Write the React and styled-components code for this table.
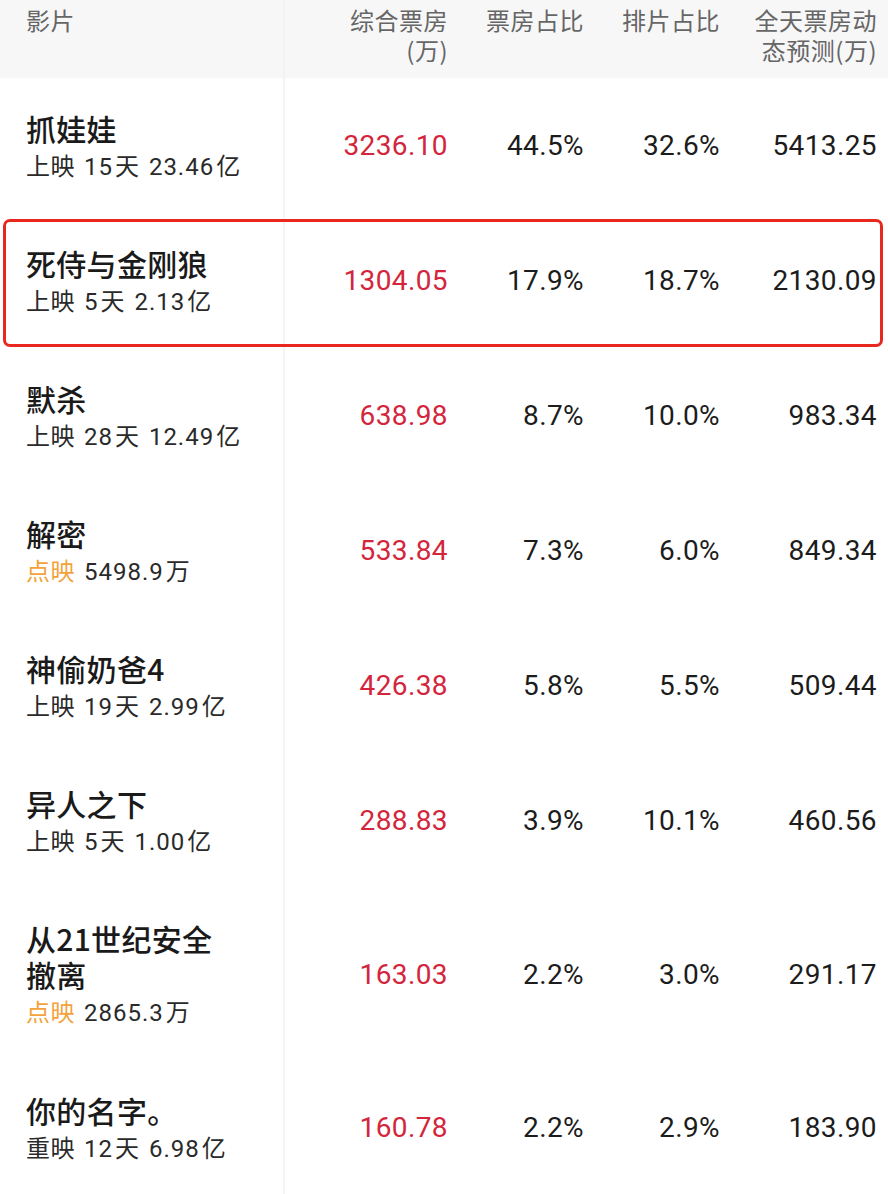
import React from 'react'
import styled, { createGlobalStyle } from 'styled-components';

const GlobalStyle = createGlobalStyle`
    html, body {
        margin: 0;
        padding: 0;
        background: #ffffff;
    }
    body {
        font-family: "Noto Sans CJK SC", "Noto Sans", sans-serif;
        -webkit-font-smoothing: antialiased;
    }
`;

const COLS = '285px 163px 136px 136px 157px';

const Table = styled.div`
    width: 888px;
    background: #ffffff;
    padding-right: 11px;
    box-sizing: border-box;
`;

const HeaderRow = styled.div`
    display: grid;
    grid-template-columns: ${COLS};
    height: 78px;
    background: #f7f7f8;
    margin-right: -11px;
    padding-right: 11px;
`;

const HeadCell = styled.div`
    padding-top: 5px;
    font-size: 24px;
    line-height: 30px;
    letter-spacing: 0.5px;
    color: #666666;
    text-align: ${p => (p.$left ? 'left' : 'right')};
    padding-left: ${p => (p.$left ? '26px' : '0')};
    ${p => p.$left && 'border-right: 2px solid #f2f2f3;'}
`;

const Row = styled.div`
    position: relative;
    display: grid;
    grid-template-columns: ${COLS};
    height: ${p => (p.$tall ? '172px' : '135px')};
    align-items: center;

    ${p => p.$marked && `
        &::after {
            content: '';
            position: absolute;
            top: 6px;
            left: 3px;
            right: -6px;
            bottom: 1px;
            border: 3px solid #e8281f;
            border-radius: 7px;
            pointer-events: none;
        }
    `}
`;

const NameCell = styled.div`
    height: 100%;
    display: flex;
    flex-direction: column;
    justify-content: center;
    padding-left: 26px;
    border-right: 2px solid #f4f4f5;
`;

const Title = styled.div`
    font-size: 30px;
    line-height: 36px;
    font-weight: 500;
    color: #1a1a1a;
    letter-spacing: 0.3px;
`;

const Sub = styled.div`
    margin-top: 4px;
    font-family: "Roboto", "Noto Sans CJK SC", sans-serif;
    font-size: 24px;
    line-height: 30px;
    color: #2a2a2a;
    letter-spacing: 1px;
    word-spacing: 2px;
`;

const Tag = styled.span`
    color: ${p => (p.$pre ? '#f2a33c' : '#2a2a2a')};
    font-family: "Noto Sans CJK SC", sans-serif;
    letter-spacing: 0.5px;
`;

const Unit = styled.span`
    font-family: "Noto Sans CJK SC", sans-serif;
    margin-left: 2px;
`;

const Num = styled.div`
    text-align: right;
    font-family: "Roboto", "Liberation Sans", sans-serif;
    font-size: 28px;
    letter-spacing: 0.4px;
    color: ${p => (p.$red ? '#d3263c' : '#1c1c1c')};
`;

const movies = [
    { name: ['抓娃娃'], tag: '上映', info: [['15', '天'], ['23.46', '亿']], box: '3236.10', share: '44.5%', shows: '32.6%', pred: '5413.25' },
    { name: ['死侍与金刚狼'], tag: '上映', info: [['5', '天'], ['2.13', '亿']], box: '1304.05', share: '17.9%', shows: '18.7%', pred: '2130.09', marked: true },
    { name: ['默杀'], tag: '上映', info: [['28', '天'], ['12.49', '亿']], box: '638.98', share: '8.7%', shows: '10.0%', pred: '983.34' },
    { name: ['解密'], tag: '点映', info: [['5498.9', '万']], box: '533.84', share: '7.3%', shows: '6.0%', pred: '849.34', pre: true },
    { name: ['神偷奶爸4'], tag: '上映', info: [['19', '天'], ['2.99', '亿']], box: '426.38', share: '5.8%', shows: '5.5%', pred: '509.44' },
    { name: ['异人之下'], tag: '上映', info: [['5', '天'], ['1.00', '亿']], box: '288.83', share: '3.9%', shows: '10.1%', pred: '460.56' },
    { name: ['从21世纪安全', '撤离'], tag: '点映', info: [['2865.3', '万']], box: '163.03', share: '2.2%', shows: '3.0%', pred: '291.17', pre: true },
    { name: ['你的名字。'], tag: '重映', info: [['12', '天'], ['6.98', '亿']], box: '160.78', share: '2.2%', shows: '2.9%', pred: '183.90' },
];

const App = () => {
  return (
    <>
      <GlobalStyle />
      <Table>
        <HeaderRow>
          <HeadCell $left>影片</HeadCell>
          <HeadCell>综合票房<br />(万)</HeadCell>
          <HeadCell>票房占比</HeadCell>
          <HeadCell>排片占比</HeadCell>
          <HeadCell>全天票房动<br />态预测(万)</HeadCell>
        </HeaderRow>
        {movies.map(m => (
          <Row key={m.box} $marked={m.marked} $tall={m.name.length > 1}>
            <NameCell>
              {m.name.map(line => <Title key={line}>{line}</Title>)}
              <Sub>
                <Tag $pre={m.pre}>{m.tag}</Tag>
                {m.info.map(([n, u]) => (
                  <span key={n + u}> {n}<Unit>{u}</Unit></span>
                ))}
              </Sub>
            </NameCell>
            <Num $red>{m.box}</Num>
            <Num>{m.share}</Num>
            <Num>{m.shows}</Num>
            <Num>{m.pred}</Num>
          </Row>
        ))}
      </Table>
    </>
  )
}

export default App
